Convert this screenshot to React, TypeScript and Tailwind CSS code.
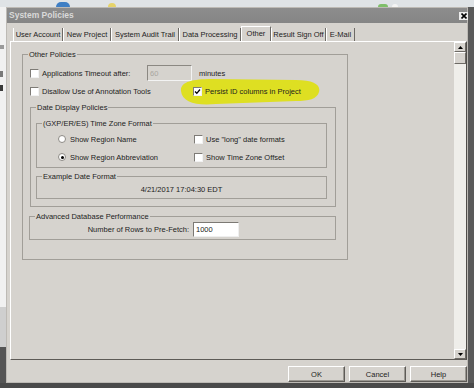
import React from 'react';

const tabs = [
  { label: 'User Account', w: 'w-[50px]' },
  { label: 'New Project', w: 'w-[48px]' },
  { label: 'System Audit Trail', w: 'w-[68px]' },
  { label: 'Data Processing', w: 'w-[62px]' },
  { label: 'Other', w: 'w-[30px]', active: true },
  { label: 'Result Sign Off', w: 'w-[55px]' },
  { label: 'E-Mail', w: 'w-[29px]' },
];

function Check({ checked }: { checked?: boolean }) {
  return (
    <span className="flex h-[9px] w-[9px] shrink-0 items-center justify-center border border-t-[#7e7b76] border-l-[#7e7b76] border-r-[#f2f2f2] border-b-[#f2f2f2] bg-white">
      {checked && (
        <svg width="7" height="7" viewBox="0 0 7 7">
          <path d="M1 3.5 L2.8 5.3 L6 1.5" fill="none" stroke="#000" strokeWidth="1.3" />
        </svg>
      )}
    </span>
  );
}

function Radio({ on }: { on?: boolean }) {
  return (
    <span className="flex h-[8px] w-[8px] shrink-0 items-center justify-center rounded-full border border-[#8d8a85] bg-white">
      {on && <span className="h-[3px] w-[3px] rounded-full bg-black" />}
    </span>
  );
}

function Group({ label, className, children }: { label: string; className: string; children: React.ReactNode }) {
  return (
    <fieldset className={`border border-[#a19e98] ${className}`}>
      <legend className="ml-[5px] px-[1px] leading-[9px]">{label}</legend>
      {children}
    </fieldset>
  );
}

function Arrow({ up }: { up?: boolean }) {
  return (
    <div className="flex h-[10px] items-center justify-center border border-t-white border-l-white border-r-[#6d6a65] border-b-[#6d6a65] bg-[#d6d3ce]">
      <svg width="5" height="3" viewBox="0 0 5 3">
        <path d={up ? 'M0 3 L2.5 0 L5 3 Z' : 'M0 0 L2.5 3 L5 0 Z'} fill="#000" />
      </svg>
    </div>
  );
}

function Button({ label }: { label: string }) {
  return (
    <div className="flex h-[16px] w-[57px] items-center justify-center border border-t-white border-l-white border-r-[#5e5b57] border-b-[#5e5b57] bg-[#d6d3ce] shadow-[inset_-1px_-1px_0_#9a9791]">
      {label}
    </div>
  );
}

export default function App() {
  return (
    <div className="flex h-[388px] w-[474px] flex-col overflow-hidden bg-[#4e4e4e] font-['Liberation_Sans',Arial,sans-serif] text-[7.5px] leading-[9px] text-[#1d1d1d]">
      {/* desktop strip above the dialog */}
      <div className="flex h-[7px] items-end bg-[#dfe3e6]">
        <span className="ml-[56px] h-[5px] w-[14px] rounded-t-full bg-[#3f7fc4]" />
        <span className="ml-[38px] h-[4px] w-[8px] rounded-t-full bg-[#e6d36a]" />
        <span className="ml-[262px] h-[3px] w-[10px] rounded-t-full bg-[#7fbf6a]" />
        <span className="ml-[4px] h-[3px] w-[6px] rounded-t-full bg-[#f4f4f4]" />
      </div>

      <div className="flex h-[376px]">
        {/* desktop strip left */}
        <div className="flex w-[6px] flex-col bg-[#f1f1f1]">
          <div className="mt-[38px] h-[4px] w-[4px] bg-[#9a9a9a]" />
          <div className="mt-[22px] h-[6px] w-[3px] bg-[#7a7a7a]" />
          <div className="mt-[8px] h-[6px] w-[3px] bg-[#3a3a3a]" />
          <div className="mt-auto h-[40px] bg-[#cfcfcf]" />
          <div className="h-[36px] bg-[#555555]" />
        </div>

        {/* dialog */}
        <div className="flex w-[462px] flex-col border border-[#bdbab5] bg-[#d6d3ce]">
          <div className="flex h-[15px] items-center bg-gradient-to-b from-[#8d8d8d] to-[#858585] pl-[2px]">
            <span className="text-[8.5px] font-bold text-[#d9d9d9]">System Policies</span>
            <span className="ml-auto mr-[-1px] flex h-[8px] w-[9px] items-center justify-center bg-[#ececec]">
              <svg width="6" height="6" viewBox="0 0 6 6">
                <path d="M0.5 0.5 L5.5 5.5 M5.5 0.5 L0.5 5.5" stroke="#000" strokeWidth="1.6" />
              </svg>
            </span>
          </div>

          {/* tabs */}
          <div className="ml-[6px] mt-[3px] flex h-[15px] items-end">
            {tabs.map((t) =>
              t.active ? (
                <div
                  key={t.label}
                  className={`${t.w} flex h-[15px] items-start justify-center border-l border-t border-r border-l-white border-t-white border-r-[#6d6a65] pt-[2px]`}
                >
                  {t.label}
                </div>
              ) : (
                <div
                  key={t.label}
                  className={`${t.w} flex h-[13px] items-center justify-center border-l border-r border-l-white border-r-[#6d6a65]`}
                >
                  {t.label}
                </div>
              )
            )}
          </div>

          {/* tab panel */}
          <div className="ml-[3px] flex h-[319px] w-[457px] border border-t-white border-l-white border-r-[#4f4d4a] border-b-[#5d5a56]">
            <div className="flex-1 pl-[11px] pt-[8px]">
              <Group label="Other Policies" className="w-[326px] pb-[19px]">
                <div className="mt-[6px] flex h-[16px] items-center pl-[7px]">
                  <div className="flex w-[117px] items-center gap-[3px]">
                    <Check />
                    <span>Applications Timeout after:</span>
                  </div>
                  <div className="flex h-[16px] w-[45px] items-center border border-t-[#8b8882] border-l-[#8b8882] border-r-[#f3f3f3] border-b-[#f3f3f3] pl-[2px] text-[#a9a6a0]">
                    60
                  </div>
                  <span className="ml-[7px]">minutes</span>
                </div>

                <div className="mt-[4px] flex h-[12px] items-center pl-[7px]">
                  <div className="flex w-[163px] items-center gap-[3px]">
                    <Check />
                    <span>Disallow Use of Annotation Tools</span>
                  </div>
                  <div className="relative isolate flex items-center gap-[3px]">
                    <svg
                      className="absolute left-[-15px] top-[-10px] -z-10"
                      width="144"
                      height="31"
                      viewBox="0 0 144 31"
                      style={{ filter: 'blur(0.7px)' }}
                    >
                      <path
                        d="M3 14 C2 5 14 2 34 2 L118 3 C136 3 143 8 141 15 C139 22 131 24 118 24 L38 27 C18 29 4 25 3 14 Z"
                        fill="#dedf22"
                      />
                    </svg>
                    <Check checked />
                    <span>Persist ID columns in Project</span>
                  </div>
                </div>

                <Group label="Date Display Policies" className="ml-[7px] mt-[6px] w-[306px] pb-[7px]">
                  <Group label="(GXP/ER/ES) Time Zone Format" className="ml-[5px] mt-[7px] w-[291px] pb-[4px]">
                    <div className="mt-[5px] flex h-[12px] items-center pl-[21px]">
                      <div className="flex w-[136px] items-center gap-[4px]">
                        <Radio />
                        <span>Show Region Name</span>
                      </div>
                      <div className="flex items-center gap-[3px]">
                        <Check />
                        <span>Use "long" date formats</span>
                      </div>
                    </div>
                    <div className="mt-[6px] flex h-[12px] items-center pl-[21px]">
                      <div className="flex w-[136px] items-center gap-[4px]">
                        <Radio on />
                        <span>Show Region Abbreviation</span>
                      </div>
                      <div className="flex items-center gap-[3px]">
                        <Check />
                        <span>Show Time Zone Offset</span>
                      </div>
                    </div>
                  </Group>

                  <Group label="Example Date Format" className="ml-[5px] mt-[4px] w-[291px] pb-[4px]">
                    <div className="mt-[4px] text-center">4/21/2017 17:04:30 EDT</div>
                  </Group>
                </Group>

                <Group label="Advanced Database Performance" className="ml-[6px] mt-[5px] w-[307px] pb-[2px]">
                  <div className="mt-[1px] flex h-[15px] items-center">
                    <span className="w-[159px] text-right">Number of Rows to Pre-Fetch:</span>
                    <div className="ml-[4px] flex h-[15px] w-[46px] items-center border border-t-[#7c7974] border-l-[#7c7974] border-r-[#efefef] border-b-[#efefef] bg-white pl-[2px]">
                      1000
                    </div>
                  </div>
                </Group>
              </Group>
            </div>

            {/* scrollbar */}
            <div className="flex w-[12px] flex-col bg-[#efeeea]">
              <Arrow up />
              <div className="h-[12px] border border-t-white border-l-white border-r-[#6d6a65] border-b-[#6d6a65] bg-[#d6d3ce]" />
              <div className="flex-1" />
              <Arrow />
            </div>
          </div>

          {/* buttons */}
          <div className="mt-[6px] flex justify-end gap-[4px]">
            <Button label="OK" />
            <Button label="Cancel" />
            <Button label="Help" />
          </div>
        </div>

        <div className="w-[6px] bg-[#5a5a5a]" />
      </div>

      <div className="h-[5px] bg-[#4a4a4a]" />
    </div>
  );
}
